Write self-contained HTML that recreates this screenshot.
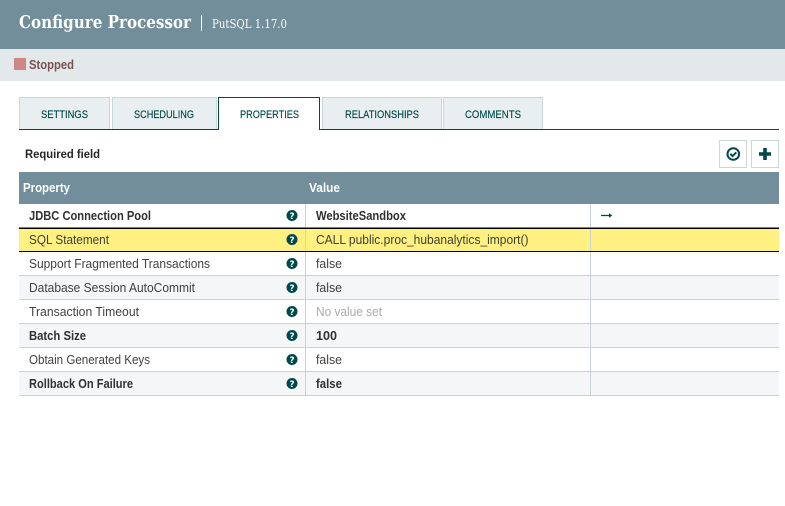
<!DOCTYPE html>
<html lang="en">
<head>
<meta charset="utf-8">
<title>Configure Processor</title>
<style>
html,body{margin:0;padding:0;background:#fff;width:785px;height:506px;overflow:hidden}
svg{display:block}
text{font-family:"Liberation Sans",sans-serif}
.s{font-family:"DejaVu Serif",serif}
.tab{font-size:11px;fill:#004849;stroke:#004849;stroke-width:.15}
.l{fill:#262626;font-size:12.500px;fill-opacity:.88}
.b{font-size:12.500px;font-weight:bold;fill:#262626;fill-opacity:.95}
.h{font-size:12.500px;font-weight:bold;fill:#fff}
.q{font-family:"DejaVu Sans",sans-serif;font-size:9px;font-weight:bold;fill:#fff;text-anchor:middle}
</style>
</head>
<body>
<svg width="785" height="506" viewBox="0 0 785 506" xmlns="http://www.w3.org/2000/svg">
<rect width="785" height="506" fill="#fff"/>
<rect width="785" height="49" fill="#728e9b"/>
<text class="s" x="19" y="28" font-size="18" font-weight="bold" fill="#fff" textLength="172" lengthAdjust="spacingAndGlyphs">Configure Processor</text>
<rect x="201" y="15" width="1" height="16" fill="#fff"/>
<text class="s" x="212" y="28" font-size="12" fill="#fff" textLength="75" lengthAdjust="spacingAndGlyphs">PutSQL 1.17.0</text>

<rect y="49" width="785" height="32" fill="#e3e8eb"/>
<rect x="14" y="58" width="12" height="12" fill="#d18686"/>
<text x="29" y="69" font-size="12.500" font-weight="bold" fill="#775351" textLength="45" lengthAdjust="spacingAndGlyphs">Stopped</text>

<!-- tabs -->
<g fill="#e9eef0" stroke="#cbd6da">
<rect x="19.500" y="97.500" width="90" height="32"/>
<rect x="112.500" y="97.500" width="104" height="32"/>
<rect x="322.500" y="97.500" width="119" height="32"/>
<rect x="443.500" y="97.500" width="99" height="32"/>
</g>
<rect x="19" y="129" width="760" height="1" fill="#004849"/>
<path d="M218.500 130V97.500H319.500V130" fill="#fff" stroke="#004849"/>
<rect x="219" y="129" width="100" height="1" fill="#fff"/>
<text class="tab" x="41" y="118" textLength="47" lengthAdjust="spacingAndGlyphs">SETTINGS</text>
<text class="tab" x="134" y="118" textLength="60" lengthAdjust="spacingAndGlyphs">SCHEDULING</text>
<text class="tab" x="240" y="118" textLength="59" lengthAdjust="spacingAndGlyphs">PROPERTIES</text>
<text class="tab" x="345" y="118" textLength="74" lengthAdjust="spacingAndGlyphs">RELATIONSHIPS</text>
<text class="tab" x="465" y="118" textLength="56" lengthAdjust="spacingAndGlyphs">COMMENTS</text>

<text x="25" y="158" font-size="12" font-weight="bold" fill="#262626" textLength="75" lengthAdjust="spacingAndGlyphs">Required field</text>

<!-- buttons -->
<rect x="719.500" y="140.500" width="27" height="27" fill="#fff" stroke="#cbd6da"/>
<rect x="751.500" y="140.500" width="27" height="27" fill="#fff" stroke="#cbd6da"/>
<circle cx="733.300" cy="154" r="5.800" fill="none" stroke="#004849" stroke-width="2"/>
<path d="M730.300 153.800l2.300 2.300 3.700-3.800" fill="none" stroke="#004849" stroke-width="1.900"/>
<path d="M765 148v12M759 154h12" stroke="#004849" stroke-width="3.600" fill="none"/>

<!-- table header -->
<rect x="19" y="172" width="760" height="32" fill="#728e9b"/>
<text class="h" x="23" y="192" textLength="47" lengthAdjust="spacingAndGlyphs">Property</text>
<text class="h" x="309" y="192" textLength="31" lengthAdjust="spacingAndGlyphs">Value</text>

<!-- rows -->
<rect x="19" y="228" width="760" height="24" fill="#fff082"/>
<rect x="19" y="276" width="760" height="23" fill="#f4f6f7"/>
<rect x="19" y="324" width="760" height="23" fill="#f4f6f7"/>
<rect x="19" y="372" width="760" height="23" fill="#f4f6f7"/>
<g fill="#c7d2d7">
<rect x="19" y="275" width="760" height="1"/>
<rect x="19" y="299" width="760" height="1"/>
<rect x="19" y="323" width="760" height="1"/>
<rect x="19" y="347" width="760" height="1"/>
<rect x="19" y="371" width="760" height="1"/>
<rect x="19" y="395" width="760" height="1"/>
<rect x="305" y="204" width="1" height="192"/>
<rect x="590" y="204" width="1" height="192"/>
</g>
<rect x="19" y="227.500" width="760" height="1.500" fill="#000"/>
<rect x="19" y="251" width="760" height="1" fill="#000"/>

<text class="b" x="29" y="220" textLength="122" lengthAdjust="spacingAndGlyphs">JDBC Connection Pool</text>
<text class="l" x="29" y="244" textLength="80" lengthAdjust="spacingAndGlyphs">SQL Statement</text>
<text class="l" x="29" y="268" textLength="181" lengthAdjust="spacingAndGlyphs">Support Fragmented Transactions</text>
<text class="l" x="29" y="292" textLength="166" lengthAdjust="spacingAndGlyphs">Database Session AutoCommit</text>
<text class="l" x="29" y="316" textLength="110" lengthAdjust="spacingAndGlyphs">Transaction Timeout</text>
<text class="b" x="29" y="340" textLength="57" lengthAdjust="spacingAndGlyphs">Batch Size</text>
<text class="l" x="29" y="364" textLength="121" lengthAdjust="spacingAndGlyphs">Obtain Generated Keys</text>
<text class="b" x="29" y="388" textLength="104" lengthAdjust="spacingAndGlyphs">Rollback On Failure</text>

<text class="b" x="316" y="220" textLength="90" lengthAdjust="spacingAndGlyphs">WebsiteSandbox</text>
<text class="l" x="316" y="244" textLength="212.500" lengthAdjust="spacingAndGlyphs">CALL public.proc_hubanalytics_import()</text>
<text class="l" x="316" y="268" textLength="26" lengthAdjust="spacingAndGlyphs">false</text>
<text class="l" x="316" y="292" textLength="26" lengthAdjust="spacingAndGlyphs">false</text>
<text x="316" y="316" font-size="12.500" fill="#aaa" textLength="66" lengthAdjust="spacingAndGlyphs">No value set</text>
<text class="b" x="316" y="340" textLength="21" lengthAdjust="spacingAndGlyphs">100</text>
<text class="l" x="316" y="364" textLength="26" lengthAdjust="spacingAndGlyphs">false</text>
<text class="b" x="316" y="388" textLength="26" lengthAdjust="spacingAndGlyphs">false</text>

<!-- help icons -->
<g fill="#004849">
<circle cx="292" cy="215.500" r="5.500"/>
<circle cx="292" cy="239.500" r="5.500"/>
<circle cx="292" cy="263.500" r="5.500"/>
<circle cx="292" cy="287.500" r="5.500"/>
<circle cx="292" cy="311.500" r="5.500"/>
<circle cx="292" cy="335.500" r="5.500"/>
<circle cx="292" cy="359.500" r="5.500"/>
<circle cx="292" cy="383.500" r="5.500"/>
</g>
<text class="q" x="292" y="218.800">?</text>
<text class="q" x="292" y="242.800">?</text>
<text class="q" x="292" y="266.800">?</text>
<text class="q" x="292" y="290.800">?</text>
<text class="q" x="292" y="314.800">?</text>
<text class="q" x="292" y="338.800">?</text>
<text class="q" x="292" y="362.800">?</text>
<text class="q" x="292" y="386.800">?</text>

<!-- arrow -->
<path d="M601 215.500H610" stroke="#004849" stroke-width="1.300" fill="none"/>
<path d="M609 213.300L612.300 215.500L609 217.700Z" fill="#004849"/>
</svg>
</body>
</html>
